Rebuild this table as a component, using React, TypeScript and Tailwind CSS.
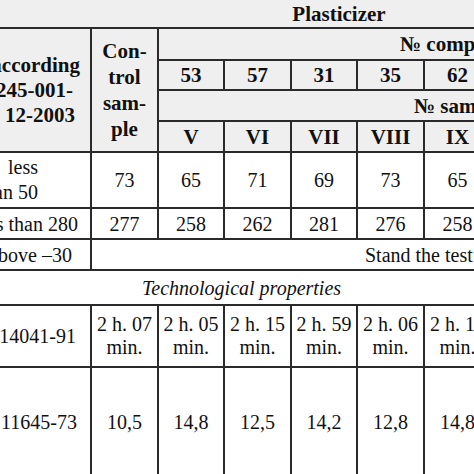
const serif = { fontFamily: '"Liberation Serif", "Times New Roman", serif' };

const cell = 'border-2 border-[#2a2a2a] p-0 text-center align-middle';

export default function App() {
  const numbers = ['53', '57', '31', '35', '62'];
  const samples = ['V', 'VI', 'VII', 'VIII', 'IX'];
  const row1 = ['73', '65', '71', '69', '73', '65'];
  const row2 = ['277', '258', '262', '281', '276', '258'];
  const times = ['07', '05', '15', '59', '06', '10'];
  const row5 = ['10,5', '14,8', '12,5', '14,2', '12,8', '14,8'];

  return (
    <div className="w-[474px] h-[474px] overflow-hidden bg-white text-[#111]" style={serif}>
      <table className="table-fixed border-collapse -ml-[110px] w-[600px] text-[20px] leading-[22px]">
        <colgroup>
          <col className="w-[200px]" />
          <col className="w-[67px]" />
          <col className="w-[66px]" />
          <col className="w-[67px]" />
          <col className="w-[66px]" />
          <col className="w-[67px]" />
          <col className="w-[67px]" />
        </colgroup>
        <tbody>
          <tr className="h-[28px] bg-[#efefef]">
            <td colSpan={7} className="border-b-2 border-[#2a2a2a] p-0 pl-[296px] text-center font-bold text-[21px] whitespace-nowrap">
              Plasticizer
            </td>
          </tr>
          <tr className="h-[32px] bg-[#efefef]">
            <td rowSpan={4} className={`${cell} font-bold text-[21px] leading-[25px]`}>
              <div className="flex flex-col items-end pr-[10px] whitespace-nowrap">
                <span>according</span>
                <span className="mr-[7px]">2245-001-</span>
                <span className="mr-[5px]">12-2003</span>
              </div>
            </td>
            <td rowSpan={4} className={`${cell} font-bold text-[21px] leading-[26px]`}>
              Con-<br />trol<br />sam-<br />ple
            </td>
            <td colSpan={5} className={`${cell} text-left pl-[241px] font-bold text-[21px] whitespace-nowrap overflow-hidden`}>
              № compositions
            </td>
          </tr>
          <tr className="h-[30px] bg-[#efefef] font-bold text-[21px]">
            {numbers.map((n) => (
              <td key={n} className={cell}>{n}</td>
            ))}
          </tr>
          <tr className="h-[31px] bg-[#efefef]">
            <td colSpan={5} className={`${cell} text-left pl-[255px] font-bold text-[21px] whitespace-nowrap overflow-hidden`}>
              № samples
            </td>
          </tr>
          <tr className="h-[31px] bg-[#efefef] font-bold text-[21px]">
            {samples.map((s) => (
              <td key={s} className={cell}>{s}</td>
            ))}
          </tr>
          <tr className="h-[56px]">
            <td className={`${cell} leading-[25px]`}>
              <div className="flex flex-col items-end pr-[52px] whitespace-nowrap">
                <span>
                  <span className="mr-[16px]">not</span>less
                </span>
                <span>than 50</span>
              </div>
            </td>
            {row1.map((v, i) => (
              <td key={i} className={cell}>{v}</td>
            ))}
          </tr>
          <tr className="h-[31px]">
            <td className={`${cell} text-right pr-[12px] whitespace-nowrap`}>not less than 280</td>
            {row2.map((v, i) => (
              <td key={i} className={cell}>{v}</td>
            ))}
          </tr>
          <tr className="h-[31px]">
            <td className={`${cell} text-right pr-[18px] whitespace-nowrap`}>not above –30</td>
            <td colSpan={6} className={`${cell} text-left pl-[273px] whitespace-nowrap overflow-hidden`}>
              Stand the test
            </td>
          </tr>
          <tr className="h-[35px]">
            <td colSpan={7} className={`${cell} text-left pl-[250px] italic whitespace-nowrap`}>
              Technological properties
            </td>
          </tr>
          <tr className="h-[62px]">
            <td className={`${cell} text-right pr-[14px] whitespace-nowrap`}>GOST 14041-91</td>
            {times.map((t, i) => (
              <td key={i} className={`${cell} leading-[23px] whitespace-nowrap`}>
                2 h. {t}<br />min.
              </td>
            ))}
          </tr>
          <tr className="h-[110px]">
            <td className={`${cell} text-right pr-[13px] whitespace-nowrap`}>GOST 11645-73</td>
            {row5.map((v, i) => (
              <td key={i} className={cell}>{v}</td>
            ))}
          </tr>
        </tbody>
      </table>
    </div>
  );
}
